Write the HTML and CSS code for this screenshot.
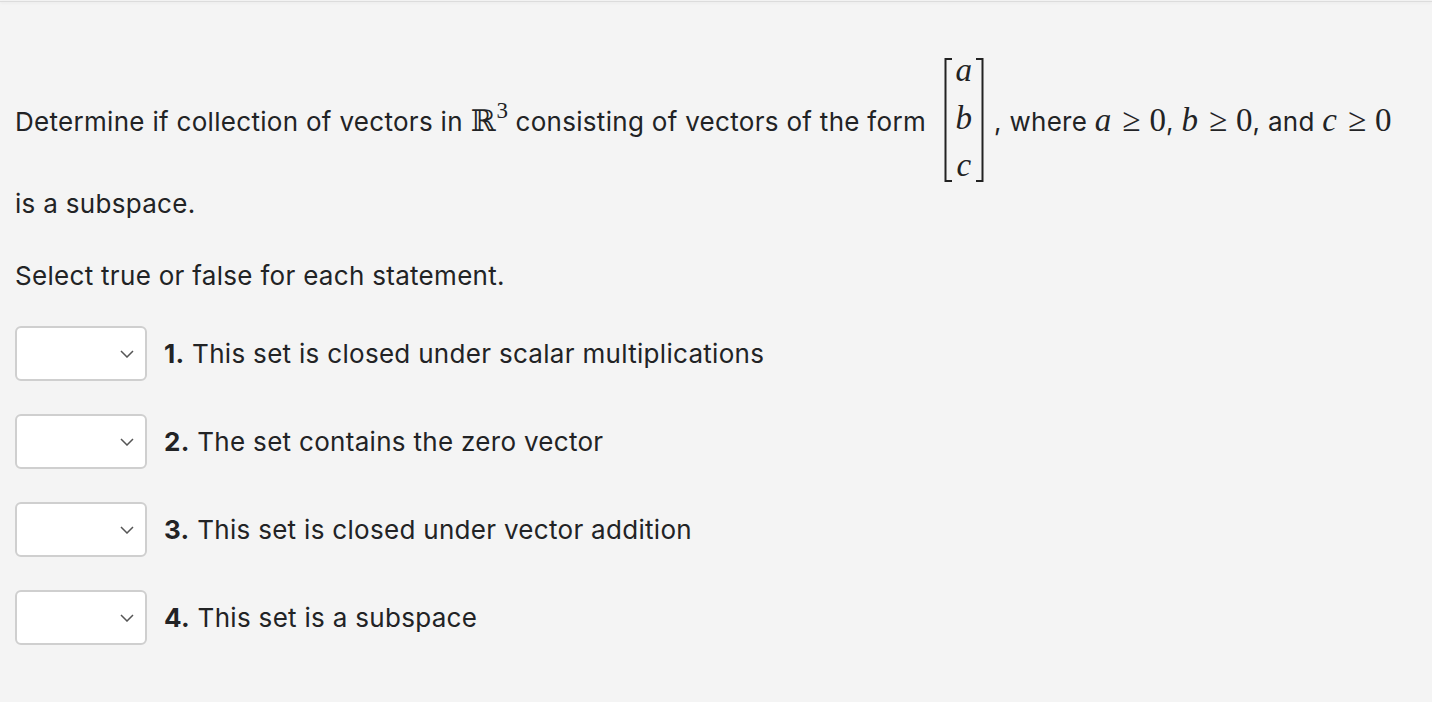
FILE: index.html
```html
<!DOCTYPE html>
<html>
<head>
<meta charset="utf-8">
<link rel="stylesheet" href="styles.css">
</head>
<body>
<div class="topbar"></div>
<main class="question">
  <div class="stem">
    <span class="txt">Determine if collection of vectors in <span class="m"><span class="bb">ℝ</span><sup class="sup">3</sup></span> consisting of vectors of the form</span>
    <span class="matrix">
      <svg class="bracket" width="8" height="124" viewBox="0 0 8 124"><path d="M8 1 H1.5 V123 H8" fill="none" stroke="#222" stroke-width="2"/></svg>
      <span class="cells">
        <span class="mi">a</span>
        <span class="mi">b</span>
        <span class="mi">c</span>
      </span>
      <svg class="bracket" width="8" height="124" viewBox="0 0 8 124"><path d="M0 1 H6.5 V123 H0" fill="none" stroke="#222" stroke-width="2"/></svg>
    </span>
    <span class="txt">, where <span class="m"><span class="mi">a</span><span class="rel">≥</span>0</span>, <span class="m"><span class="mi">b</span><span class="rel">≥</span>0</span>, and <span class="m"><span class="mi">c</span><span class="rel">≥</span>0</span></span>
  </div>
  <p class="para first">is a subspace.</p>
  <p class="para second">Select true or false for each statement.</p>
  <div class="items">
    <div class="item">
      <div class="select"><svg class="chev" width="14" height="8" viewBox="0 0 14 8"><path d="M1 1 L7 7 L13 1" fill="none" stroke="#555" stroke-width="1.5"/></svg></div>
      <span class="label"><b>1.</b> This set is closed under scalar multiplications</span>
    </div>
    <div class="item">
      <div class="select"><svg class="chev" width="14" height="8" viewBox="0 0 14 8"><path d="M1 1 L7 7 L13 1" fill="none" stroke="#555" stroke-width="1.5"/></svg></div>
      <span class="label"><b>2.</b> The set contains the zero vector</span>
    </div>
    <div class="item">
      <div class="select"><svg class="chev" width="14" height="8" viewBox="0 0 14 8"><path d="M1 1 L7 7 L13 1" fill="none" stroke="#555" stroke-width="1.5"/></svg></div>
      <span class="label"><b>3.</b> This set is closed under vector addition</span>
    </div>
    <div class="item">
      <div class="select"><svg class="chev" width="14" height="8" viewBox="0 0 14 8"><path d="M1 1 L7 7 L13 1" fill="none" stroke="#555" stroke-width="1.5"/></svg></div>
      <span class="label"><b>4.</b> This set is a subspace</span>
    </div>
  </div>
</main>
</body>
</html>
```
FILE: styles.css
```css
html, body {
  margin: 0;
  padding: 0;
  background: #f4f4f4;
}
body {
  font-family: Inter, "Noto Sans", sans-serif;
  color: #222325;
  font-size: 26px;
  letter-spacing: 0.3px;
  height: 702px;
  overflow: hidden;
}
.topbar {
  height: 1px;
  background: #dcdcdc;
  margin-top: 1px;
  box-shadow: 0 1px 3px rgba(0,0,0,0.08);
}
.question {
  padding-left: 15px;
}
.stem {
  display: flex;
  align-items: center;
  margin-top: 56px;
  height: 124px;
  white-space: nowrap;
}
.m {
  font-family: "Liberation Serif", "DejaVu Serif", serif;
  font-size: 33px;
  letter-spacing: 0;
}
.bb {
  font-family: "DejaVu Serif", serif;
  font-size: 30px;
}
.sup {
  font-size: 23px;
  vertical-align: 13px;
  line-height: 0;
  margin-left: 1px;
}
.mi {
  font-family: "Liberation Serif", serif;
  font-style: italic;
}
.rel {
  font-family: "Liberation Serif", "DejaVu Serif", serif;
  font-size: 33px;
  margin: 0 9px 0 11px;
}
.matrix {
  display: inline-flex;
  align-items: stretch;
  margin-left: 18px;
  margin-right: 10px;
  height: 124px;
}
.bracket {
  display: block;
}
.cells {
  display: flex;
  flex-direction: column;
  justify-content: space-between;
  align-items: center;
  width: 24px;
  padding: 0 0 5px;
  font-family: "Liberation Serif", serif;
  font-size: 33px;
  line-height: 24px;
}
.para {
  margin: 0;
  line-height: 32px;
}
.para.first {
  margin-top: 6px;
}
.para.second {
  margin-top: 40px;
}
.items {
  display: flex;
  flex-direction: column;
  gap: 33px;
  margin-top: 34px;
}
.item {
  display: flex;
  align-items: center;
  height: 55px;
}
.select {
  height: 51px;
  width: 117px;
  border: 2px solid #cfcfcf;
  border-radius: 6px;
  background: #fff;
  display: flex;
  align-items: center;
  justify-content: flex-end;
  padding-right: 11px;
  box-sizing: content-box;
  margin-right: 17px;
}
.chev {
  display: block;
}
.label b {
  font-weight: 700;
}
```
